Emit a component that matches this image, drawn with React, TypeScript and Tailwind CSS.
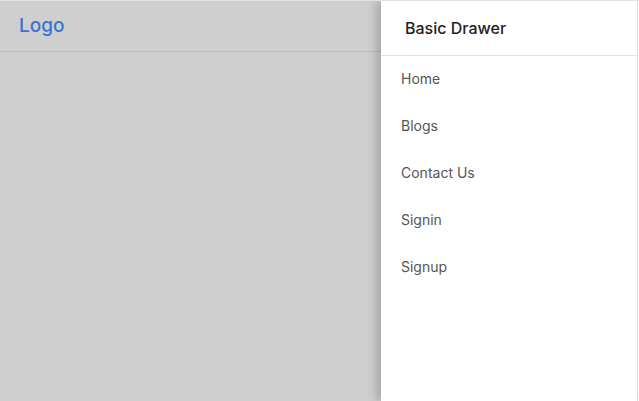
const links = ["Home", "Blogs", "Contact Us", "Signin", "Signup"];

export default function App() {
  return (
    <div
      className="flex h-[401px] w-[639px] overflow-hidden border-t border-[#e2e2e2] bg-white pr-px"
      style={{ fontFamily: "Inter, 'Liberation Sans', sans-serif" }}
    >
      <main className="flex-1 bg-[#cfcfcf]">
        <header className="flex h-[51px] items-center border-b border-[#bdbdbd] px-[19px]">
          <span className="text-[19px] font-medium text-[#3a72d4]">Logo</span>
        </header>
      </main>

      <aside className="relative z-10 flex w-[257px] flex-col border-r border-[#e0e0e0] bg-white shadow-[-4px_0_10px_rgba(0,0,0,0.22)]">
        <div className="flex h-[55px] items-center border-b border-[#e3e3e3] pl-[24px]">
          <h2 className="text-[16px] font-medium text-[#222]">Basic Drawer</h2>
        </div>
        <nav className="-mt-px flex flex-col">
          {links.map((l) => (
            <a
              key={l}
              href="#"
              className="flex h-[47px] items-center pl-[20px] text-[14px] text-[#555]"
            >
              {l}
            </a>
          ))}
        </nav>
      </aside>
    </div>
  );
}
